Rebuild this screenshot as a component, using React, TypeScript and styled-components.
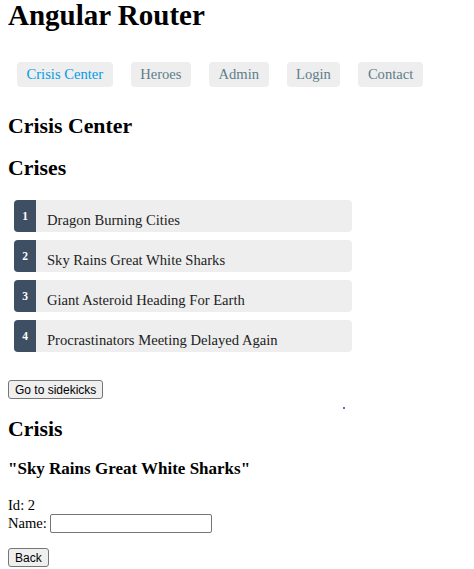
import { createGlobalStyle, styled } from 'styled-components';

const GlobalStyle = createGlobalStyle`
  body {
    margin: 0 8px;
    background: #fff;
    color: #000;
    font-family: 'Liberation Serif', 'Times New Roman', serif;
    font-size: 14.6px;
    line-height: 17px;
  }
`;

const Title = styled.h1`
  margin: -1px 0 0;
  font-size: 29px;
  line-height: 32px;
  font-weight: bold;
`;

const Nav = styled.nav`
  display: flex;
  gap: 18px;
  margin-top: 31px;
  padding-left: 9px;
`;

const NavLink = styled.a<{ $active?: boolean }>`
  display: block;
  padding: 4px 9.5px;
  border-radius: 4px;
  background: #eee;
  font-size: 14.6px;
  line-height: 17px;
  color: ${(p) => (p.$active ? '#039be5' : '#607d8b')};
  text-decoration: none;
  cursor: pointer;
`;

const Heading = styled.h2<{ $top: number }>`
  margin: ${(p) => p.$top}px 0 0;
  font-size: 21.8px;
  line-height: 25px;
  font-weight: bold;
`;

const SubHeading = styled.h3`
  margin: 17px 0 0;
  font-size: 17px;
  line-height: 20px;
  font-weight: bold;
`;

const CrisisList = styled.ul`
  list-style: none;
  margin: 19px 0 0;
  padding: 0 0 0 6px;
  display: flex;
  flex-direction: column;
  gap: 8px;
`;

const CrisisItem = styled.li`
  display: flex;
  align-items: center;
  width: 338px;
  height: 32px;
  background: #eee;
  border-radius: 4px;
  color: #222;
  cursor: pointer;
`;

const Badge = styled.span`
  display: flex;
  align-items: center;
  justify-content: center;
  align-self: stretch;
  width: 22px;
  margin-right: 11px;
  background: #3e4f63;
  border-radius: 4px 0 0 4px;
  color: #fff;
  font-size: 11.5px;
  font-weight: bold;
`;

const ItemName = styled.span`
  padding-top: 8px;
`;

const Button = styled.button<{ $top: number }>`
  display: block;
  margin-top: ${(p) => p.$top}px;
  height: 19px;
  padding: 0 6px;
  border: 1px solid #767676;
  border-radius: 3px;
  background: #efefef;
  color: #000;
  font-family: 'Liberation Sans', Arial, sans-serif;
  font-size: 12px;
  line-height: 16px;
`;

const DotRow = styled.div`
  display: flex;
  margin-top: 8px;
  height: 2px;
  padding-left: 335px;
`;

const Dot = styled.span`
  width: 2px;
  height: 2px;
  border-radius: 1px;
  background: #3a3a8c;
`;

const IdLine = styled.div`
  margin-top: 18px;
`;

const NameRow = styled.label`
  display: flex;
  align-items: center;
  gap: 3px;
`;

const NameInput = styled.input`
  box-sizing: border-box;
  width: 162px;
  height: 19px;
  margin: 0;
  padding: 1px 2px;
  border: 1px solid #767676;
  border-radius: 2px;
  font-family: 'Liberation Sans', Arial, sans-serif;
  font-size: 12px;
`;

const crises = [
  { id: 1, name: 'Dragon Burning Cities' },
  { id: 2, name: 'Sky Rains Great White Sharks' },
  { id: 3, name: 'Giant Asteroid Heading For Earth' },
  { id: 4, name: 'Procrastinators Meeting Delayed Again' },
];

const navItems = ['Crisis Center', 'Heroes', 'Admin', 'Login', 'Contact'];

const App = () => {
  return (
    <>
      <GlobalStyle />
      <Title>Angular Router</Title>
      <Nav>
        {navItems.map((item, i) => (
          <NavLink key={item} $active={i === 0}>
            {item}
          </NavLink>
        ))}
      </Nav>
      <Heading $top={27}>Crisis Center</Heading>
      <Heading $top={17}>Crises</Heading>
      <CrisisList>
        {crises.map((crisis) => (
          <CrisisItem key={crisis.id}>
            <Badge>{crisis.id}</Badge>
            <ItemName>{crisis.name}</ItemName>
          </CrisisItem>
        ))}
      </CrisisList>
      <Button $top={28}>Go to sidekicks</Button>
      <DotRow>
        <Dot />
      </DotRow>
      <Heading $top={8}>Crisis</Heading>
      <SubHeading>"Sky Rains Great White Sharks"</SubHeading>
      <IdLine>Id: 2</IdLine>
      <NameRow>
        Name: <NameInput />
      </NameRow>
      <Button $top={15}>Back</Button>
    </>
  );
};

export default App;
